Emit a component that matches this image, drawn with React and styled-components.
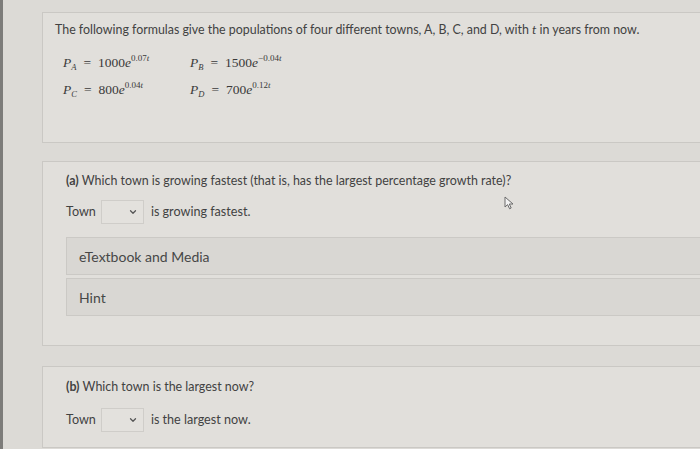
import React from 'react';
import styled, { createGlobalStyle } from 'styled-components';
import { ChevronDown } from 'lucide-react';

const GlobalStyle = createGlobalStyle`
    html, body {
        margin: 0;
        padding: 0;
        background: #dcdad6;
        overflow: hidden;
    }
    body {
        font-family: Lato, "Open Sans", sans-serif;
        color: #424242;
    }
`;

const Page = styled.div`
    position: relative;
    min-height: 449px;
    box-sizing: border-box;
    border-left: 3px solid #7d7c7a;
    padding: 12px 0 0 39px;
    display: flex;
    flex-direction: column;
    gap: 18px;
`;

const Card = styled.section`
    background: #e1dfdb;
    border: 1px solid #cac8c4;
    border-right: none;
    padding: ${p => p.$pad || '0'};
    margin-top: ${p => p.$top || '0'};
`;

const Intro = styled.p`
    margin: 0;
    font-size: 12.4px;
    line-height: 16px;
`;

const Formulas = styled.div`
    display: grid;
    grid-template-columns: 127px 130px;
    grid-auto-rows: 16px;
    row-gap: 11px;
    margin: 17px 0 0 8px;
    font-family: "Liberation Serif", "DejaVu Serif", serif;
    font-size: 13.5px;
    line-height: 16px;
    color: #3a3a3a;
`;

const Formula = styled.div`
    white-space: nowrap;
    height: 16px;
`;

const Var = styled.i`
    font-style: italic;
`;

const Sub = styled.sub`
    font-size: 8.5px;
    font-style: italic;
    vertical-align: -3px;
    line-height: 0;
`;

const Sup = styled.sup`
    font-size: 9px;
    vertical-align: 6px;
    line-height: 0;
`;

const Eq = styled.span`
    margin: 0 7px 0 7px;
`;

const Question = styled.p`
    margin: 0;
    font-size: 12.45px;
    line-height: 16px;

    b {
        font-weight: 700;
    }
`;

const AnswerRow = styled.div`
    display: flex;
    align-items: center;
    margin-top: ${p => p.$top || '11px'};
    font-size: 12.6px;
    line-height: 16px;
`;

const Select = styled.div`
    width: 43px;
    height: 24px;
    box-sizing: border-box;
    margin: 0 7px 0 ${p => p.$gap || '5px'};
    border: 1px solid #cfcdc9;
    background: #e3e1dd;
    display: flex;
    align-items: center;
    justify-content: flex-end;
    padding-right: 5px;
    color: #555;
`;

const Resources = styled.div`
    display: flex;
    flex-direction: column;
    gap: 3px;
    margin-top: 13px;
`;

const Resource = styled.div`
    height: 38px;
    box-sizing: border-box;
    display: flex;
    align-items: center;
    padding-left: 12px;
    background: #d9d7d3;
    border: 1px solid #cbc9c5;
    border-right: none;
    font-size: 14px;
    color: #474747;
`;

const Cursor = styled.svg`
    position: absolute;
    left: 501px;
    top: 196px;
`;

function Power({ base, exp }) {
    return (
        <>
            {base}<Var>e</Var><Sup>{exp}<Var>t</Var></Sup>
        </>
    );
}

function P({ sub }) {
    return (
        <>
            <Var>P</Var><Sub>{sub}</Sub>
        </>
    );
}

export default function App() {
    return (
        <>
            <GlobalStyle />
            <Page>
                <Card $pad="9px 0 44px 12px">
                    <Intro>
                        The following formulas give the populations of four different towns, A, B, C, and D, with <Var>t</Var> in years from now.
                    </Intro>
                    <Formulas>
                        <Formula><P sub="A" /><Eq>=</Eq><Power base="1000" exp="0.07" /></Formula>
                        <Formula><P sub="B" /><Eq>=</Eq><Power base="1500" exp="−0.04" /></Formula>
                        <Formula><P sub="C" /><Eq>=</Eq><Power base="800" exp="0.04" /></Formula>
                        <Formula><P sub="D" /><Eq>=</Eq><Power base="700" exp="0.12" /></Formula>
                    </Formulas>
                </Card>

                <Card $pad="11px 0 29px 23px">
                    <Question><b>(a)</b> Which town is growing fastest (that is, has the largest percentage growth rate)?</Question>
                    <AnswerRow>
                        Town
                        <Select><ChevronDown size={10} strokeWidth={3} /></Select>
                        is growing fastest.
                    </AnswerRow>
                    <Resources>
                        <Resource>eTextbook and Media</Resource>
                        <Resource>Hint</Resource>
                    </Resources>
                </Card>

                <Card $pad="12px 0 15px 23px" $top="2px">
                    <Question><b>(b)</b> Which town is the largest now?</Question>
                    <AnswerRow $top="13px">
                        Town
                        <Select $gap="5px"><ChevronDown size={10} strokeWidth={3} /></Select>
                        is the largest now.
                    </AnswerRow>
                </Card>

                <Cursor width="11" height="14" viewBox="0 0 11 14">
                    <path d="M1 1 L1 11 L3.6 8.6 L5.6 12.8 L7.2 12 L5.3 8 L9 8 Z" fill="#f2f2f2" stroke="#6a6a6a" strokeWidth="1" strokeLinejoin="round" />
                </Cursor>
            </Page>
        </>
    );
}
